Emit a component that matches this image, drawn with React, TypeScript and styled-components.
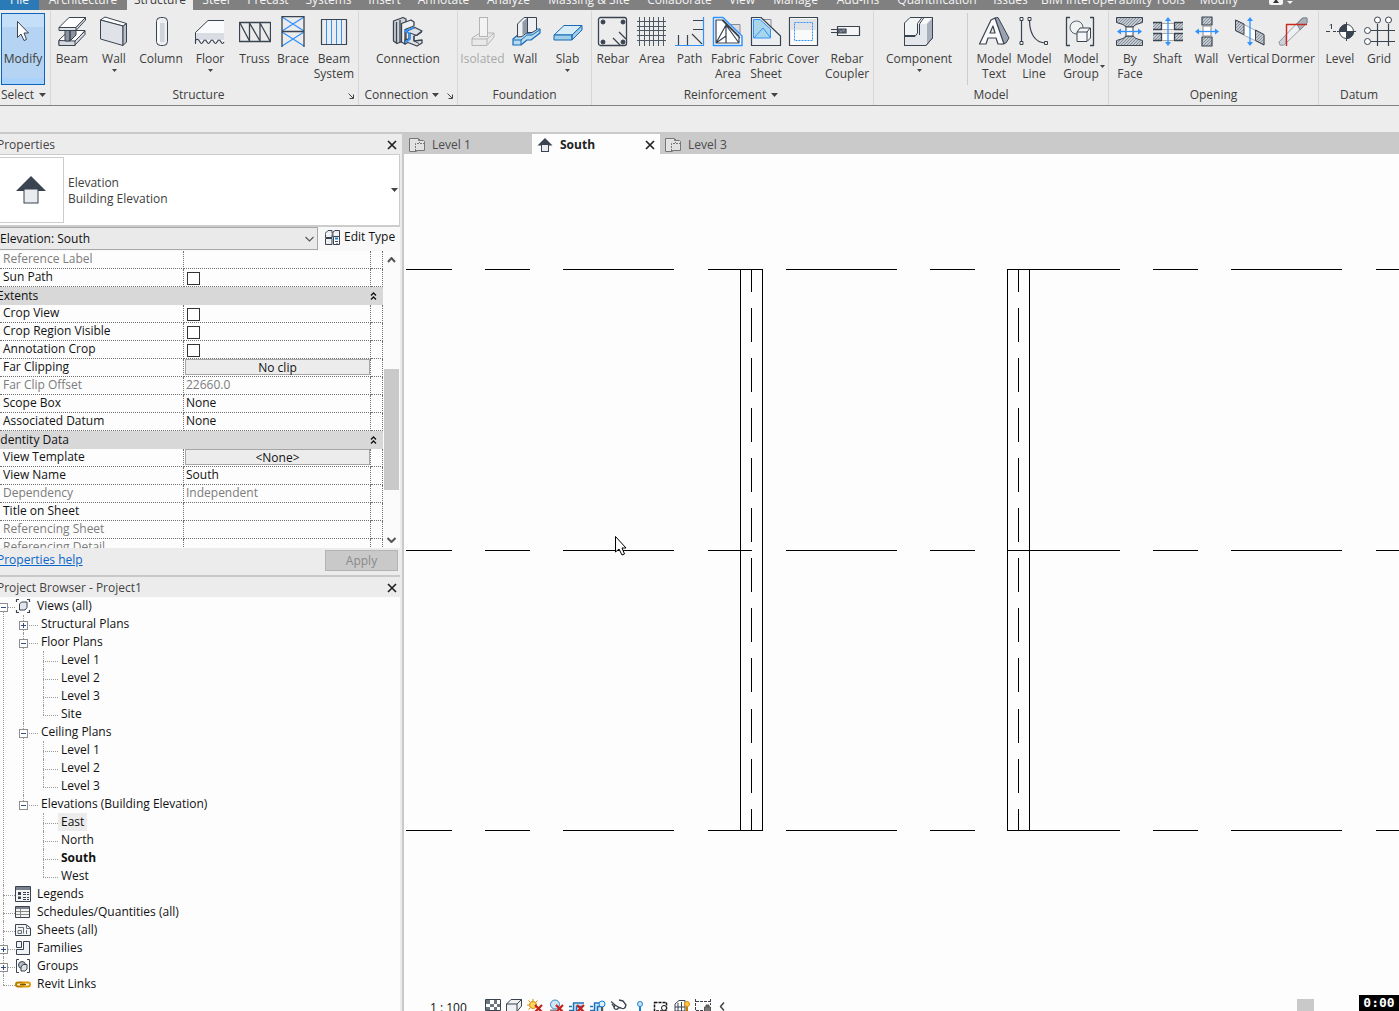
import React from "react";
import styled, { createGlobalStyle, css } from "styled-components";

const ink = "#3a4350";
const blue = "#2f93ff";
const line = "#c9c9c9";
const face = "#ececec";

const GlobalStyle = createGlobalStyle`
  *, *::before, *::after { box-sizing: border-box; }
  html, body, #root { height: 100%; }
  body { margin: 0; overflow: hidden; background: ${face}; }
  body, button, select, input { font-family: "Open Sans", "Noto Sans", sans-serif; font-size: 12px; line-height: 16px; }
  button { padding: 0; border: 0; background: none; color: inherit; }
  svg { display: block; flex: none; }
`;

const Shell = styled.div`
  display: flex;
  flex-direction: column;
  height: 100vh;
  color: #3d3d3d;
  white-space: nowrap;
`;

/* ---------- ribbon ---------- */

const TabStrip = styled.nav`
  display: flex;
  align-items: flex-end;
  flex: none;
  height: 10px;
  overflow: hidden;
  background: #808080;
`;

const RibbonTab = styled.button<{ $w: number; $kind?: "file" | "active" }>`
  flex: 0 0 ${(p) => p.$w}px;
  min-width: 0;
  display: flex;
  justify-content: center;
  padding-bottom: 2px;
  color: ${(p) => (p.$kind === "active" ? "#3d3d3d" : "#f4f4f4")};
  background: ${(p) => (p.$kind === "file" ? "#2b7ab8" : p.$kind === "active" ? face : "transparent")};
`;

const StripExtra = styled.div`
  display: flex;
  gap: 4px;
  padding: 0 0 5px 21px;
`;

const Ribbon = styled.div`
  display: flex;
  flex: none;
  height: 96px;
  overflow: hidden;
  background: ${face};
  border-bottom: 1px solid #808080;
`;

const Panel = styled.section<{ $grow?: boolean }>`
  display: flex;
  flex-direction: column;
  flex: ${(p) => (p.$grow ? "1 0 auto" : "none")};
  margin-top: 1px;
  & + & { border-left: 1px solid #d6d6d6; }
`;

const Tools = styled.div`
  display: flex;
  height: 74px;
  padding-top: 2px;
`;

const Tool = styled.button<{ $w: number; $on?: boolean }>`
  position: relative;
  flex: none;
  width: ${(p) => p.$w}px;
  display: flex;
  flex-direction: column;
  align-items: center;
  height: 72px;
  padding-top: 3px;
  line-height: 15px;
  ${(p) =>
    p.$on &&
    css`
      margin: 0 5px 0 1px;
      padding-top: 2px;
      border: 1px solid #0a64c0;
      background: linear-gradient(#c5dff8 0 18%, #b5d3f2 18% 92%, #a8d2fa 92%);
    `}
  &:disabled { color: #a9a9a9; }
`;

const ToolLabel = styled.span`
  display: block;
  margin-top: 3px;
  text-align: center;
  white-space: pre;
`;

const DropMark = styled.span<{ $side?: boolean }>`
  display: block;
  margin-top: 3px;
  ${(p) => p.$side && css`position: absolute; right: 3px; top: 49px;`}
`;

const Divider = styled.i`
  width: 1px;
  height: 72px;
  margin: 0 6px 0 3px;
  background: #cccccc;
`;

const PanelTitle = styled.div<{ $inset: number; $gap: number }>`
  display: flex;
  align-items: center;
  justify-content: center;
  position: relative;
  height: 19px;
  gap: ${(p) => p.$gap}px;
  padding: 1px ${(p) => p.$inset}px 0 0;
`;

const Launcher = styled.button`
  position: absolute;
  right: 4px;
  top: 8px;
`;

const OptionsBar = styled.div`
  flex: none;
  height: 28px;
  background: #ededed;
  border-bottom: 2px solid ${line};
`;

/* ---------- docked palettes ---------- */

const Work = styled.div`
  display: flex;
  flex: 1;
  min-height: 0;
`;

const Dock = styled.aside`
  display: flex;
  flex-direction: column;
  flex: 0 0 404px;
  overflow: hidden;
  padding-right: 2px;
  background: ${face};
  border-right: 2px solid ${line};
`;

const PaletteHead = styled.header`
  display: flex;
  align-items: center;
  justify-content: space-between;
  flex: none;
  height: 20px;
  margin-left: -3px;
  padding: 1px 2px 0 0;
  color: #444;
`;

const TypeBox = styled.button`
  display: flex;
  align-items: center;
  flex: none;
  height: 73px;
  padding: 0 1px 0 0;
  text-align: left;
  background: #fff;
  border: solid #ccc;
  border-width: 1px 1px 2px 0;
`;

const Thumb = styled.span`
  display: grid;
  place-items: center;
  width: 64px;
  height: 66px;
  padding-right: 1px;
  border: 1px solid #ccc;
  border-left: 0;
`;

const TypeText = styled.span`
  flex: 1;
  padding: 2px 0 0 4px;
`;

const FilterRow = styled.div`
  display: flex;
  flex: none;
  height: 24px;
  background: #f8f8f8;
`;

const Combo = styled.label`
  position: relative;
  display: block;
  width: 318px;
  select {
    width: 100%;
    height: 23px;
    padding: 0 20px 0 0;
    appearance: none;
    border: 1px solid #a8a8a8;
    border-left: 0;
    border-radius: 0;
    background: #eaeaea;
    color: #111;
  }
  svg { position: absolute; right: 4px; top: 9px; }
`;

const EditType = styled.button`
  display: flex;
  gap: 3px;
  padding: 2px 0 0 6px;
  color: #111;
`;

const GridArea = styled.div`
  display: flex;
  flex: 0 0 297px;
  overflow: hidden;
  background: #fdfdfd;
`;

const PropTable = styled.table`
  flex: none;
  width: 383px;
  height: min-content;
  table-layout: fixed;
  border-spacing: 0;
  color: #111;
`;

const PropRow = styled.tr<{ $dim?: boolean }>`
  height: 18px;
  color: ${(p) => (p.$dim ? "#7c7c7c" : "#111")};
  th, td {
    height: 18px;
    padding: 0 0 1px 3px;
    line-height: 16px;
    font-weight: 400;
    text-align: left;
    border: dotted #707070;
    border-width: 0 1px 1px 0;
    overflow: hidden;
  }
  td { padding: 0 0 1px 2px; }
`;

const GroupRow = styled.tr`
  height: 18px;
  background: #d8d8d8;
  th {
    height: 18px;
    padding: 0;
    font-weight: 400;
    text-align: left;
  }
`;

const GroupHead = styled.div`
  display: flex;
  align-items: center;
  justify-content: space-between;
  height: 18px;
  margin-left: -3px;
  padding-right: 6px;
`;

const Tick = styled.input`
  display: block;
  appearance: none;
  width: 13px;
  height: 13px;
  margin: 3px 0 0 1px;
  border: 1px solid #333;
  background: #fff;
`;

const CellButton = styled.button`
  display: block;
  width: 186px;
  height: 16px;
  margin: 0 0 0 -1px;
  padding-top: 1px;
  line-height: 13px;
  background: #ececec;
  border: solid #a6a6a6;
  border-width: 1px 2px 1px 1px;
`;

const Scroll = styled.div`
  display: flex;
  flex-direction: column;
  align-items: center;
  width: 17px;
  padding: 6px 1px 5px;
  background: #fbfbfb;
`;

const ScrollThumb = styled.i`
  width: 15px;
  height: 121px;
  margin: 106px 0 auto;
  background: #c9c9c9;
`;

const PaletteFoot = styled.footer`
  display: flex;
  justify-content: space-between;
  flex: none;
  height: 29px;
  margin-left: -3px;
  padding: 2px 2px 0 0;
  border-bottom: 2px solid ${line};
  a { height: 20px; line-height: 20px; color: #0a66c8; }
`;

const Apply = styled.button`
  width: 73px;
  height: 21px;
  border: 1px solid #b4b4b4;
  background: #c9c9c9;
  &:disabled { color: #8a8a8a; }
`;

const TreeArea = styled.div`
  flex: 1;
  min-height: 0;
  overflow: hidden;
  background: #fdfdfd;
  color: #111;
`;

const Branch = styled.ul`
  list-style: none;
  margin: 0 0 0 20px;
  padding: 0;
  ${TreeArea} > & { margin-left: 3px; }
`;

const Node = styled.li`
  position: relative;
  &::before {
    content: "";
    position: absolute;
    left: 0;
    top: 0;
    bottom: 0;
    border-left: 1px dotted #9a9a9a;
  }
  &:last-child::before { bottom: auto; height: 10px; }
  ${TreeArea} > ul > &:first-child::before { top: 10px; }
`;

const NodeRow = styled.div`
  display: flex;
  align-items: center;
  height: 18px;
`;

const Stem = styled.span<{ $w: number }>`
  position: relative;
  flex: 0 0 ${(p) => p.$w}px;
  height: 1px;
  margin-top: 2px;
  border-top: 1px dotted #9a9a9a;
`;

const Toggle = styled.button`
  position: absolute;
  left: -4px;
  top: -5px;
  background: #fff;
`;

const NodeLabel = styled.span<{ $state?: "hover" | "open"; $icon?: boolean }>`
  height: 18px;
  line-height: 18px;
  margin-left: ${(p) => (p.$icon ? 3 : 0)}px;
  padding: 0 3px;
  font-weight: ${(p) => (p.$state === "open" ? 700 : 400)};
  background: ${(p) => (p.$state === "hover" ? "#ececec" : "transparent")};
`;

/* ---------- views ---------- */

const Views = styled.main`
  display: flex;
  flex-direction: column;
  flex: 1;
  min-width: 0;
  background: #fdfdfd;
`;

const ViewTabs = styled.div`
  display: flex;
  flex: none;
  height: 20px;
  background: #cacaca;
`;

const ViewTab = styled.div<{ $on?: boolean }>`
  display: flex;
  align-items: center;
  flex: 0 0 128px;
  padding: 1px 4px 0 5px;
  color: ${(p) => (p.$on ? "#222" : "#4c4c4c")};
  font-weight: ${(p) => (p.$on ? 700 : 400)};
  background: ${(p) => (p.$on ? "#fdfdfd" : "transparent")};
  > span { flex: 1; padding-left: 7px; }
`;

const Sheet = styled.div`
  flex: 1;
  min-height: 0;
  overflow: hidden;
`;

const ViewBar = styled.div`
  display: flex;
  flex: none;
  height: 16px;
  padding-left: 26px;
  overflow: hidden;
`;

const Scale = styled.button`
  width: 55px;
  padding-top: 5px;
  text-align: left;
  height: 21px;
  color: #111;
`;

const BarTools = styled.div`
  display: flex;
  flex: 1;
  align-items: flex-start;
  gap: 5px;
  padding-top: 4px;
`;

const HThumb = styled.i`
  width: 17px;
  height: 12px;
  margin: 4px 45px 0 0;
  background: #c9c9c9;
`;

const Timer = styled.div`
  width: 40px;
  height: 16px;
  background: #000;
  color: #fff;
  font: 700 13px/16px "DejaVu Sans Mono", monospace;
  text-align: center;
`;

/* ---------- icons ---------- */

const I = ({ children, s = 32 }: { children: React.ReactNode; s?: number }) => (
  <svg width={s} height={s} viewBox={`0 0 ${s} ${s}`} fill="none" stroke={ink} strokeWidth="1" strokeLinejoin="round" aria-hidden>
    {children}
  </svg>
);

const Tri = ({ w = 5 }: { w?: number }) => (
  <svg width={w} height={(w + 1) / 2} viewBox={`0 0 ${w} ${(w + 1) / 2}`} aria-hidden>
    <path d={`M0 0H${w}L${w / 2} ${(w + 1) / 2}Z`} fill="#444" />
  </svg>
);

const Cross = () => (
  <svg width="12" height="12" viewBox="0 0 12 12" aria-hidden>
    <path d="M2 2L10 10M10 2L2 10" stroke="#222" strokeWidth="1.7" />
  </svg>
);

const Chevron = ({ up, thick }: { up?: boolean; thick?: boolean }) => (
  <svg width="9" height="6" viewBox="0 0 9 6" aria-hidden>
    <path d={up ? "M1 5L4.500 1L8 5" : "M0.500 1L4.500 5L8.500 1"} fill="none" stroke="#555" strokeWidth={thick ? 2 : 1.1} />
  </svg>
);

const hatch = (id: string) => (
  <defs>
    <pattern id={id} width="3" height="3" patternUnits="userSpaceOnUse">
      <rect width="3" height="3" fill="#c3c9d1" stroke="none" />
      <path d="M0 3L3 0" stroke="#6c7580" strokeWidth=".7" />
    </pattern>
  </defs>
);

const icons: Record<string, React.ReactNode> = {
  modify: <I><path d="M10.500 5.500V21.500L14 18L17 24.500L19.500 23.500L17 17H21.500Z" fill="#fff" /></I>,
  beam: (
    <I>
      <path d="M3 24L13 14.500H29L20 24.500V27L19 29.500H3Z" fill="#fff" />
      <path d="M3 24.500V29.500H19V25ZM19 29L29 18.500V15L19 25" fill="#d5dae0" />
      <path d="M9 14H14V25H9ZM14 14L20 8V19L14 25Z" fill="#8b949f" />
      <path d="M3 11.500L13 1.500H29.500L20 11.500Z" fill="#fff" />
      <path d="M3 11.500H20V14.500H3ZM20 14.500L29.500 4V1.500L20 11.500" fill="#dfe3e8" />
    </I>
  ),
  wall: (
    <I>
      <path d="M2.500 4L7 1L28.500 7.500L25 10Z" fill="#fff" />
      <path d="M2.500 4V23L25 29.500V10Z" fill="#dfe2e8" />
      <path d="M25 10L28.500 7.500V26L25 29.500Z" fill="#b9c0ca" />
    </I>
  ),
  column: (
    <I>
      <rect x="11.500" y="1.500" width="11" height="28" rx="4" fill="#eceef1" />
      <path d="M15 7H19.500V26H15Z" fill="#cfd3da" stroke="none" />
      <path d="M13.500 4V27" stroke="#fff" strokeWidth="2" />
    </I>
  ),
  floor: (
    <I>
      <path d="M1.500 25V16.500L14 4.500H30V25Z" fill="#fafbfc" stroke="none" />
      <path d="M2 17H30V24H2Z" fill="#d9dde3" stroke="none" />
      <path d="M1.500 28V16.500L14 4.500H30" />
      <path d="M1.500 27V24Q4 22 6 26Q7.500 29 9 26Q11 22 13 26Q14.500 29 16 26Q18 22 20 26Q21.500 29 23 26Q25 22 27 26Q28.500 29 30 26" strokeWidth="1.200" fill={face} />
    </I>
  ),
  truss: (
    <I>
      <rect x=".5" y="6.500" width="31" height="19" strokeWidth="1.300" />
      <path d="M1 7L10.500 25V7L21 25V7L31 25" strokeWidth="1.300" />
    </I>
  ),
  brace: (
    <I>
      <path d="M5 1L27 15M27 1L5 15M5 16L27 30M27 16L5 30" stroke={blue} strokeWidth="1.300" />
      <path d="M5 31V.5H27V31M5 15.500H27" strokeWidth="1.300" />
    </I>
  ),
  beamSystem: (
    <I>
      <path d="M8.500 4V28M13.500 4V28M18.500 4V28M23.500 4V28" stroke={blue} />
      <rect x="3.500" y="3.500" width="25" height="25" strokeWidth="1.200" />
    </I>
  ),
  connection: (
    <I>
      <path d="M1.500 5L11 1.500L14 3V24L5 27.500L1.500 25Z" fill="#cfd4da" strokeWidth="1.300" />
      <path d="M4.500 6V27M8 4V26" strokeWidth="1.300" />
      <path d="M9.500 7.500L19 4L22 6V10L13 13.500V28L9.500 26Z" fill="#eef0f2" strokeWidth="1.300" />
      <path d="M15 15L23 11.500L30 15L25 19L22 20V25L30 24V27L25 30L16 26.500L13 28V24L17 23V18Z" fill="#dde1e6" strokeWidth="1.300" />
      <path d="M22 11.500L13 15L18 17.500V23L13 26.500" stroke={blue} strokeWidth="1.800" />
      <path d="M18 17L25 19.500L30 16M22 20V25L27 27.500" />
    </I>
  ),
  isolated: (
    <svg width="32" height="32" viewBox="0 0 32 32" fill="#e9e9e9" stroke="#b5b5b5" aria-hidden>
      <path d="M5 22L13 17H27V21L20 29.500H5ZM5 23H20V29M20 23L27 17" />
      <rect x="12.500" y="1.500" width="8" height="19" fill="#f3f3f3" />
    </svg>
  ),
  foundWall: (
    <I>
      <path d="M3 23L9 18L21 17L25 13H30V17L21 24H17L11 29H3Z" fill="#b7dcf0" stroke="#1769b5" strokeWidth="1.200" />
      <path d="M3.500 24H11L17 19H22L29.500 14M11 24V29" stroke="#1769b5" />
      <path d="M7.500 21V8L14 1.500H26.500V14L22 16.500H17L12 20.500Z" fill="#eef0f3" />
      <path d="M12.500 19V6L17 2V16Z" fill="#8f98a4" stroke="none" />
      <path d="M17.500 16V2" />
    </I>
  ),
  slab: (
    <I>
      <path d="M2 19L12 9.500H30L20 19Z" fill="#d6ecf7" stroke="#1769b5" />
      <path d="M2 19H20V24H2ZM20 24L30 14V9.500L20 19Z" fill="#9fcee8" stroke="#1769b5" />
    </I>
  ),
  rebar: (
    <I>
      <rect x="1.500" y="1.500" width="28" height="28" rx="2" strokeWidth="1.300" />
      <g fill={ink}><circle cx="6" cy="6" r="2" /><circle cx="26" cy="6" r="2" /><circle cx="6" cy="26" r="2" /><circle cx="26" cy="26" r="2" /></g>
      <path d="M16 22L23 29M22 16L29 23" strokeWidth="1.300" />
    </I>
  ),
  area: (
    <I>
      <path d="M3.500 1V30M8.500 1V30M13.500 1V30M17.500 1V30M22.500 1V30M27.500 1V30M1 5.500H30M1 10.500H30M1 14.500H30M1 19.500H30M1 24.500H30" stroke="#4d5663" />
    </I>
  ),
  path: (
    <I>
      <path d="M29.500 1V29.500H1" stroke={blue} strokeWidth="1.200" />
      <path d="M19 4.500H29M19 13.500H29M4.500 19V29M13.500 19V29M18 18L28 28" strokeWidth="1.200" />
    </I>
  ),
  fabricArea: (
    <I>
      <path d="M17 8.500H28V28H17Z" fill="#ddd" stroke="#888d99" />
      <path d="M1.500 1.500H11L30 20V29.500H1.500Z" fill="#fff" stroke={blue} strokeWidth="1.500" />
      <path d="M4 4H11L27 20V27H4ZM14 7V27L4 27L14 9L27 27M10 4L28 22M14 20L4 27" strokeWidth="1.200" />
    </I>
  ),
  fabricSheet: (
    <I>
      <path d="M12 3.500H21V20" stroke="#888d99" />
      <path d="M1.500 1.500H11L30.500 20V29.500H1.500Z" fill="#eceef1" strokeWidth="1.200" />
      <path d="M3.500 3.500H10L20.500 13V22H3.500ZM4 22L13 12L20 21" fill="#a9d5ea" stroke={blue} />
    </I>
  ),
  cover: (
    <I>
      <rect x="2.500" y="1.500" width="28" height="28" fill="#fafafa" strokeWidth="1.200" />
      <rect x="4" y="3" width="25" height="11" fill="#e0e2e6" stroke="none" />
      <rect x="7.500" y="6.500" width="18" height="18" stroke={blue} strokeDasharray="2 1" />
    </I>
  ),
  coupler: (
    <I>
      <path d="M0 13.500H9M0 16.500H9" />
      <rect x="6.500" y="10.500" width="22" height="9" strokeWidth="1.200" fill="#f6f6f6" />
      <path d="M7 13H15V17H7Z" fill="#8a919b" strokeWidth="1.200" />
      <path d="M7 17L10 13L12 17L15 13" strokeWidth=".8" />
    </I>
  ),
  component: (
    <I>
      <path d="M1.500 8L9 1.500H29.500V22L23 29.500H1.500Z" fill="#e3e6ea" />
      <path d="M1.500 8L9 1.500H29.500L23 8H17Z" fill="#fafafa" stroke="none" />
      <path d="M24 8L29.500 2V22L24 29Z" fill="#a8b0bb" stroke="none" />
      <path d="M1.500 7L7 1.500H19L14.500 7.500V17L12 20.500H1.500" fill="#f1f3f5" />
      <path d="M1.500 19.500H12M21 1.500L16.500 8V19M19 1.500H29.500V22L23 29.500H1.500V7" />
    </I>
  ),
  modelText: (
    <I>
      <path d="M17 2L20 1.500L31 22L28 27L23 28Z" fill="#9aa3af" />
      <path d="M1.500 28L13 4L17 2L26 28H20L18 22H10L8 28ZM12 17H17L15 10Z" fill="#fafafa" fillRule="evenodd" strokeWidth="1.200" />
    </I>
  ),
  modelLine: (
    <I>
      <path d="M3.500 4V26M11.500 4C11.500 16 16 27 28 27" strokeWidth="1.200" />
      <path d="M2 1.500H5V4.500H2ZM2 25.500H5V28.500H2ZM10 1.500H13V4.500H10ZM26.500 25.500H29.500V28.500H26.500Z" fill="#eee" />
    </I>
  ),
  modelGroup: (
    <I>
      <path d="M5 1.500H1.500V29.500H5M25 1.500H28.500V29.500H25" strokeWidth="1.300" />
      <circle cx="11.500" cy="11.500" r="6.500" fill="#f0f2f4" stroke="#59626e" />
      <path d="M12 16L15 12H25.500V22L22 25.500H12Z" fill="#f5f6f8" />
      <path d="M12 16H22V25M22 16L25 12" />
    </I>
  ),
  byFace: (
    <I>
      {hatch("hf")}
      <path d="M2.500 1.500H28.500V6.500L22 8.500L19 11H12L9 8.500L2.500 6.500Z" fill="url(#hf)" />
      <path d="M2.500 29.500H28.500V24.500L22 22.500L19 20H12L9 22.500L2.500 24.500Z" fill="url(#hf)" />
      <path d="M12 11H19V20H12Z" fill="#fff" />
      <path d="M4 15.500H27" stroke={blue} strokeWidth="1.300" />
      <path d="M3 15.500L7 12.500V18.500ZM28 15.500L24 12.500V18.500Z" fill={blue} stroke="none" />
    </I>
  ),
  shaft: (
    <I>
      {hatch("hs")}
      <path d="M2 7H30V13H2ZM2 18H30V24H2Z" fill="#fff" stroke="none" />
      <path d="M1 6.500H9.500V13.500H1M31 6.500H22.500V13.500H31M1 17.500H9.500V24.500H1M31 17.500H22.500V24.500H31" fill="url(#hs)" strokeWidth="1.300" />
      <path d="M10 7.500H22M10 13.500H22M10 17.500H22M10 24.500H22" stroke="#aaa" />
      <path d="M16 4V28" stroke={blue} strokeWidth="1.300" />
      <path d="M16 1L13 5H19ZM16 30L13 26H19Z" fill={blue} stroke="none" />
    </I>
  ),
  openWall: (
    <I>
      {hatch("hw")}
      <path d="M11 1H21V9H11ZM11 21H21V30H11Z" fill="url(#hw)" strokeWidth="1.200" />
      <path d="M12 10H20V20H12Z" fill="#fff" stroke="#888" />
      <path d="M6 15.500H26" stroke={blue} strokeWidth="1.300" />
      <path d="M4 15.500L8 12.500V18.500ZM28 15.500L24 12.500V18.500Z" fill={blue} stroke="none" />
    </I>
  ),
  vertical: (
    <I>
      {hatch("hv")}
      <path d="M2.500 4L31 19V29L2.500 15Z" fill="#fff" stroke="#aaa" />
      <path d="M2.500 4L11 8V18.500L2.500 14.500ZM22.500 14L31 18.500V29L22.500 24.500Z" fill="url(#hv)" />
      <path d="M17 4V27" stroke={blue} strokeWidth="1.300" />
      <path d="M17 1L14 5H20ZM17 30L14 26H20Z" fill={blue} stroke="none" />
    </I>
  ),
  dormer: (
    <I>
      <path d="M2 26L25 2H30V7L7 29L3 29Z" fill="#eef0f3" stroke="#999fa8" />
      <path d="M20 8L26 2H30V7L23 14Z" fill="#aab1ba" stroke="#7d858f" />
      <path d="M2 26L9 19V27L7 29H3Z" fill="#ccd1d8" stroke="#999fa8" />
      <path d="M9.500 30V8.500H30" stroke="#c8281e" strokeWidth="1.400" />
    </I>
  ),
  level: (
    <I>
      <path d="M2 15.500H6M9 15.500H12M7.500 13V8L6 9.500" />
      <circle cx="22.500" cy="15.500" r="7" fill="#fff" />
      <path d="M22.500 15.500V8.500A7 7 0 0 0 15.500 15.500ZM22.500 15.500V22.500A7 7 0 0 0 29.500 15.500Z" fill={ink} />
      <path d="M13 15.500H32M22.500 6V25" />
    </I>
  ),
  grid: (
    <I>
      <path d="M14.500 8V30M25.500 8V30M8 14.500H32M8 25.500H32" strokeWidth="1.200" />
      <g fill="#fff"><circle cx="14.500" cy="4" r="3" /><circle cx="25.500" cy="4" r="3" /><circle cx="4.500" cy="14.500" r="3" /><circle cx="4.500" cy="25.500" r="3" /></g>
    </I>
  ),
};

const HouseIcon = ({ s = 16 }: { s?: number }) => (
  <svg width={s} height={s} viewBox="0 0 32 32" aria-hidden>
    <path d="M16 2L31 17H1Z" fill={ink} />
    <rect x="9" y="15" width="14" height="14" fill="#e9ebee" stroke={ink} strokeWidth={s > 16 ? 1 : 2} />
  </svg>
);

const PlanIcon = () => (
  <svg width="16" height="14" viewBox="0 0 16 14" fill="#e2e2e2" stroke="#777" aria-hidden>
    <path d="M.5 .5H9.500V2.500H14.500L15.500 3.500V12.500H7.500V13.500H.5Z" />
    <path d="M6.500 13V5.500H15M10.500 1V5" fill="none" strokeDasharray="2 1" />
  </svg>
);

const EditIcon = () => (
  <I s={17}>
    <path d="M1.500 4L4 1.500H8V8.500H1.500ZM9 3L11 1.500H15.500V8.500H9ZM1.500 9.500H8V15.500H1.500Z" fill="#eceef1" />
    <path d="M1.500 5H8M9.500 5H14" stroke="#fff" />
    <rect x="9.500" y="7.500" width="6" height="8" fill="#fff" />
    <path d="M11 9.500H14" stroke="#1b7fd0" strokeWidth="2" /><path d="M11 12.500H14M12.500 14.500H13.500" />
  </I>
);

const treeIcons: Record<string, React.ReactNode> = {
  views: <I s={16}><path d="M4 1.500H1.500V4M12 1.500H14.500V4M4 14.500H1.500V12M12 14.500H14.500V12" strokeWidth="1.200" /><path d="M4.500 6L6.500 4H12V9.500L10 12H4.500Z" fill="#e3e6ee" /></I>,
  legends: <I s={16}><rect x=".5" y=".5" width="15" height="15" fill="#f4f4f4" /><path d="M1 2.500H15" strokeWidth="3" stroke="#78818c" /><path d="M3 6H6V9H3ZM3 10.500H6V13H3Z" fill={ink} stroke="none" /><path d="M8 6.500H14M8 8.500H14M8 11.500H14M8 13.500H14" strokeDasharray="3 1" /></I>,
  schedules: <I s={16}><rect x=".5" y="2.500" width="14" height="11" fill="#f4f4f4" /><path d="M1 4H14" strokeWidth="2" stroke="#78818c" /><path d="M5.500 5V13M1 7.500H14M1 10.500H14" stroke="#888" /></I>,
  sheets: <I s={16}><path d="M.5 2.500H11L15.500 6V13.500H.5Z" fill="#f4f4f4" /><path d="M11.500 3V6.500H15M3 5.500H8.500V11.500M3 8.500H6.500V11.500H3ZM11.500 8V12" stroke="#66707c" /></I>,
  families: <I s={16}><path d="M1.500 1.500H6.500V7.500H1.500ZM8.500 1.500H14.500V14.500H1.500V9.500H8.500Z" fill="#f0f2f5" /></I>,
  groups: <I s={16}><path d="M4 1.500H1.500V14.500H4M12 1.500H14.500V14.500H12" /><circle cx="7" cy="7" r="3.500" fill="#b5bbc3" /><path d="M6 9L8 6.500H12V11L10 13H6Z" fill="#dfe2e6" /></I>,
  links: <I s={16}><rect x="1" y="6.500" width="8" height="4" rx="2" stroke="#b57d00" strokeWidth="2" fill="#fff0b0" /><rect x="7" y="6.500" width="8" height="4" rx="2" stroke="#d99b0a" strokeWidth="2" /><path d="M5 8.500H11" stroke="#7a5500" /></I>,
};

/* ---------- data ---------- */

type ToolSpec = { icon: string; label: string; w: number; drop?: boolean | "side"; off?: boolean; on?: boolean; split?: boolean };
type PanelSpec = { title: string; menu?: boolean; launch?: boolean; tools: ToolSpec[] };

const ribbonTabs: [string, number, ("file" | "active")?][] = [
  ["File", 39, "file"], ["Architecture", 88], ["Structure", 66, "active"], ["Steel", 46], ["Precast", 58], ["Systems", 63],
  ["Insert", 49], ["Annotate", 69], ["Analyze", 61], ["Massing & Site", 100], ["Collaborate", 81], ["View", 44], ["Manage", 63],
  ["Add-Ins", 62], ["Quantification", 96], ["Issues", 51], ["BIM Interoperability Tools", 154], ["Modify", 58],
];

const panels: PanelSpec[] = [
  { title: "Select", menu: true, tools: [{ icon: "modify", label: "Modify", w: 44, on: true }] },
  {
    title: "Structure", launch: true,
    tools: [
      { icon: "beam", label: "Beam", w: 42 }, { icon: "wall", label: "Wall", w: 42, drop: true }, { icon: "column", label: "Column", w: 52 },
      { icon: "floor", label: "Floor", w: 46, drop: true }, { icon: "truss", label: "Truss", w: 43 }, { icon: "brace", label: "Brace", w: 34 },
      { icon: "beamSystem", label: "Beam\nSystem", w: 48 },
    ],
  },
  { title: "Connection", menu: true, launch: true, tools: [{ icon: "connection", label: "Connection", w: 98 }] },
  {
    title: "Foundation",
    tools: [{ icon: "isolated", label: "Isolated", w: 49, off: true }, { icon: "foundWall", label: "Wall", w: 37 }, { icon: "slab", label: "Slab", w: 47, drop: true }],
  },
  {
    title: "Reinforcement", menu: true,
    tools: [
      { icon: "rebar", label: "Rebar", w: 42 }, { icon: "area", label: "Area", w: 36 }, { icon: "path", label: "Path", w: 39 },
      { icon: "fabricArea", label: "Fabric\nArea", w: 38 }, { icon: "fabricSheet", label: "Fabric\nSheet", w: 38 },
      { icon: "cover", label: "Cover", w: 36 }, { icon: "coupler", label: "Rebar\nCoupler", w: 52 },
    ],
  },
  {
    title: "Model",
    tools: [
      { icon: "component", label: "Component", w: 90, drop: true }, { icon: "modelText", label: "Model\nText", w: 40, split: true },
      { icon: "modelLine", label: "Model\nLine", w: 40 }, { icon: "modelGroup", label: "Model\nGroup", w: 54, drop: "side" },
    ],
  },
  {
    title: "Opening",
    tools: [
      { icon: "byFace", label: "By\nFace", w: 42 }, { icon: "shaft", label: "Shaft", w: 33 }, { icon: "openWall", label: "Wall", w: 45 },
      { icon: "vertical", label: "Vertical", w: 39 }, { icon: "dormer", label: "Dormer", w: 50 },
    ],
  },
  { title: "Datum", tools: [{ icon: "level", label: "Level", w: 42 }, { icon: "grid", label: "Grid", w: 36 }] },
];

type Prop = { name: string; kind?: "group" | "check" | "button"; value?: string; dim?: boolean };
const props: Prop[] = [
  { name: "Reference Label", dim: true }, { name: "Sun Path", kind: "check" },
  { name: "Extents", kind: "group" },
  { name: "Crop View", kind: "check" }, { name: "Crop Region Visible", kind: "check" }, { name: "Annotation Crop", kind: "check" },
  { name: "Far Clipping", kind: "button", value: "No clip" }, { name: "Far Clip Offset", value: "22660.0", dim: true },
  { name: "Scope Box", value: "None" }, { name: "Associated Datum", value: "None" },
  { name: "Identity Data", kind: "group" },
  { name: "View Template", kind: "button", value: "<None>" }, { name: "View Name", value: "South" },
  { name: "Dependency", value: "Independent", dim: true }, { name: "Title on Sheet" },
  { name: "Referencing Sheet", dim: true }, { name: "Referencing Detail", dim: true },
];

type TreeNode = { label: string; icon?: string; fold?: "+" | "-"; state?: "hover" | "open"; kids?: TreeNode[] };
const tree: TreeNode[] = [
  {
    label: "Views (all)", icon: "views", fold: "-",
    kids: [
      { label: "Structural Plans", fold: "+" },
      { label: "Floor Plans", fold: "-", kids: [{ label: "Level 1" }, { label: "Level 2" }, { label: "Level 3" }, { label: "Site" }] },
      { label: "Ceiling Plans", fold: "-", kids: [{ label: "Level 1" }, { label: "Level 2" }, { label: "Level 3" }] },
      {
        label: "Elevations (Building Elevation)", fold: "-",
        kids: [{ label: "East", state: "hover" }, { label: "North" }, { label: "South", state: "open" }, { label: "West" }],
      },
    ],
  },
  { label: "Legends", icon: "legends" }, { label: "Schedules/Quantities (all)", icon: "schedules" }, { label: "Sheets (all)", icon: "sheets" },
  { label: "Families", icon: "families", fold: "+" }, { label: "Groups", icon: "groups", fold: "+" }, { label: "Revit Links", icon: "links" },
];

/* ---------- parts ---------- */

const RibbonPanel = ({ p, last }: { p: PanelSpec; last: boolean }) => (
  <Panel $grow={last}>
    <Tools>
      {p.tools.map((t) => (
        <React.Fragment key={t.label}>
          {t.split && <Divider />}
          <Tool $w={t.w} $on={t.on} disabled={t.off}>
            {icons[t.icon]}
            <ToolLabel>{t.label}</ToolLabel>
            {t.drop && <DropMark $side={t.drop === "side"}><Tri /></DropMark>}
          </Tool>
        </React.Fragment>
      ))}
    </Tools>
    <PanelTitle $inset={p.launch ? 12 : p.menu ? 3 : 0} $gap={p.launch ? 4 : 5}>
      {p.title}
      {p.menu && <Tri w={7} />}
      {p.launch && (
        <Launcher aria-label={`${p.title} settings`}>
          <svg width="6" height="6" viewBox="0 0 6 6" aria-hidden><path d="M.5 .5L5 5M5.500 1.500V5.500H1.500" fill="none" stroke="#444" /></svg>
        </Launcher>
      )}
    </PanelTitle>
  </Panel>
);

const TreeItem = ({ n, depth }: { n: TreeNode; depth: number }) => (
  <Node>
    <NodeRow>
      <Stem $w={depth === 0 ? 12 : 15}>
        {n.fold && (
          <Toggle aria-label={`Toggle ${n.label}`}>
            <svg width="9" height="9" viewBox="0 0 9 9" aria-hidden>
              <rect x=".5" y=".5" width="8" height="8" fill="#fff" stroke="#8f8f8f" />
              <path d={n.fold === "+" ? "M2 4.500H7M4.500 2V7" : "M2 4.500H7"} stroke="#34508c" />
            </svg>
          </Toggle>
        )}
      </Stem>
      {n.icon && treeIcons[n.icon]}
      <NodeLabel $state={n.state} $icon={!!n.icon}>{n.label}</NodeLabel>
    </NodeRow>
    {n.kids && <Branch>{n.kids.map((k) => <TreeItem key={k.label} n={k} depth={depth + 1} />)}</Branch>}
  </Node>
);

const PropertyRow = ({ p, id }: { p: Prop; id: string }) =>
  p.kind === "group" ? (
    <GroupRow>
      <th colSpan={3}>
        <GroupHead>
          {p.name}
          <svg width="7" height="8" viewBox="0 0 7 8" aria-hidden><path d="M1 3.500L3.500 1L6 3.500M1 7.500L3.500 5L6 7.500" fill="none" stroke="#111" strokeWidth="1.300" /></svg>
        </GroupHead>
      </th>
    </GroupRow>
  ) : (
    <PropRow $dim={p.dim}>
      <th>{p.kind === "check" ? <label htmlFor={id}>{p.name}</label> : p.name}</th>
      <td>{p.kind === "check" ? <Tick id={id} type="checkbox" /> : p.kind === "button" ? <CellButton>{p.value}</CellButton> : p.value}</td>
      <td />
    </PropRow>
  );

/* Level lines and columns of the elevation, in sheet pixels. */
const levelDashes = [[2, 48], [81, 126], [159, 270], [304, 358], [382, 493], [526, 571], [603, 716], [749, 794], [827, 938], [972, 1100]];
const centreDashes = [[116, 138], [154, 188], [204, 238], [254, 288], [304, 338], [354, 388], [404, 438], [454, 488], [504, 538], [555, 589], [605, 639], [655, 676]];

const Elevation = () => (
  <svg width="100%" height="100%" fill="none" stroke="#000" shapeRendering="crispEdges" role="img" aria-label="South elevation">
    {[115, 396, 676].map((y) => (
      <path key={y} d={levelDashes.map(([a, b]) => `M${a} ${y + 0.5}H${y === 396 && b === 358 ? 348 : b}`).join("")} />
    ))}
    {[336, 603].map((x) => (
      <React.Fragment key={x}>
        <path d={`M${x + 0.5} 115V677M${x + 22.5} 115V677`} />
        <path d={centreDashes.map(([a, b]) => `M${x + 11.5} ${a}V${b}`).join("")} />
      </React.Fragment>
    ))}
    <path d="M211.500 382.500V398L215 395L218 401L220.500 400L218 394H222Z" fill="#fff" shapeRendering="auto" />
  </svg>
);

const sun = <><circle cx="6" cy="6" r="3.500" fill="#ffd75a" stroke="#d48a00" /><path d="M6 0V2M0 6H2M1.500 1.500L3 3M10.500 1.500L9 3M1.500 10.500L3 9" stroke="#d48a00" /></>;
const redX = <path d="M8 6L15 13M15 6L8 13" stroke="#c4221c" strokeWidth="2.200" />;
const crop = <><rect x="5" y="5" width="9" height="8" fill="#cfe6f7" stroke="none" /><path d="M0 11.500H4M4.500 13V4H15M0 7.500H3M7.500 13V7.500H13" stroke="#1d6fb8" strokeWidth="1.500" /></>;
const bulb = <><circle cx="12" cy="5" r="3" fill="#d9eefc" stroke="#1b7fd0" /><path d="M12 8V12" stroke="#555" strokeWidth="2" /></>;
const barIcons: [string, React.ReactNode][] = [
  ["Detail level", <><rect x=".5" y=".5" width="15" height="11" fill="#fff" /><path d="M1 1H5V5H1ZM9 1H12V5H9ZM5 5H9V8H5ZM12 5H15V8H12ZM1 8H5V11H1ZM9 8H12V11H9Z" fill="#6d7680" stroke="none" /></>],
  ["Visual style", <path d="M.5 5L5 .5H15.500V7L11 12.500H.5ZM.5 5H11V12M11 5L15.500 .5" fill="#eef0f2" />],
  ["Sun path", <>{sun}{redX}</>],
  ["Shadows", <><circle cx="7" cy="5.500" r="4.500" fill="#cfe6f7" stroke="#3b86c6" /><path d="M2 11.500H8" stroke="#888" strokeWidth="2" />{redX}</>],
  ["Crop view", <>{crop}{redX}</>],
  ["Crop region", <>{crop}{bulb}</>],
  ["Lock view", <path d="M0 2.500L4 6L3 9Q5 12 8 8.500L10 9Q14 11 15 6L12 2L8 1M3 8L1 5M8 8.500L4 6" fill="#fff" strokeWidth="1.300" />],
  ["Hide", <><circle cx="8" cy="5" r="2.500" fill="#c9e6fb" stroke="#1b7fd0" /><path d="M8 8V12" stroke="#1b7fd0" strokeWidth="2" /></>],
  ["Reveal", <><path d="M1.500 3.500H13.500V12H1.500Z" strokeDasharray="3 1" stroke="#111" strokeWidth="1.500" /><circle cx="11" cy="9" r="2.500" fill="#fff" stroke="#111" /></>],
  ["Analytical", <><path d="M1 5L5 1.500H11V12H1ZM1 8H11M4 4V12M7.500 3V12" /><circle cx="13" cy="5" r="2.500" fill="#ffc94d" stroke="#e08a00" /><path d="M13 8V12" stroke="#c47a00" strokeWidth="2" /></>],
  ["Constraints", <><path d="M.5 0V12M15.500 0V6M1 2.500H15M1 11.500H8" strokeDasharray="3 1" /><path d="M9.500 8H15.500V12.500H9.500ZM11 8V6H14V8" fill="#777" stroke="#555" /></>],
  ["Collapse", <path d="M8 3.500L4.500 7.500L8 11.500" stroke="#444" strokeWidth="1.500" />],
];

export default function App() {
  return (
    <Shell>
      <GlobalStyle />
      <TabStrip>
        {ribbonTabs.map(([t, w, k]) => <RibbonTab key={t} $w={w} $kind={k}>{t}</RibbonTab>)}
        <StripExtra>
          <svg width="14" height="10" viewBox="0 0 14 10" aria-hidden><rect width="14" height="10" rx="2" fill="#f4f4f4" /><path d="M4 8H10L7 4Z" fill="#333" /></svg>
          <svg width="6" height="10" viewBox="0 0 6 10" aria-hidden><path d="M0 6H6L3 9Z" fill="#f4f4f4" /></svg>
        </StripExtra>
      </TabStrip>
      <Ribbon>{panels.map((p, i) => <RibbonPanel key={p.title} p={p} last={i === panels.length - 1} />)}</Ribbon>
      <OptionsBar />
      <Work>
        <Dock>
          <PaletteHead>Properties<button aria-label="Close properties"><Cross /></button></PaletteHead>
          <TypeBox>
            <Thumb><HouseIcon s={32} /></Thumb>
            <TypeText>Elevation<br />Building Elevation</TypeText>
            <Tri w={7} />
          </TypeBox>
          <FilterRow>
            <Combo>
              <select aria-label="Element filter"><option>Elevation: South</option></select>
              <Chevron />
            </Combo>
            <EditType><EditIcon />Edit Type</EditType>
          </FilterRow>
          <GridArea>
            <PropTable>
              <colgroup><col style={{ width: 184 }} /><col style={{ width: 187 }} /><col /></colgroup>
              <tbody>{props.map((p, i) => <PropertyRow key={p.name} p={p} id={`prop-${i}`} />)}</tbody>
            </PropTable>
            <Scroll><Chevron up thick /><ScrollThumb /><Chevron thick /></Scroll>
          </GridArea>
          <PaletteFoot><a href="#help">Properties help</a><Apply disabled>Apply</Apply></PaletteFoot>
          <PaletteHead>Project Browser - Project1<button aria-label="Close project browser"><Cross /></button></PaletteHead>
          <TreeArea><Branch>{tree.map((n) => <TreeItem key={n.label} n={n} depth={0} />)}</Branch></TreeArea>
        </Dock>
        <Views>
          <ViewTabs>
            <ViewTab><PlanIcon /><span>Level 1</span></ViewTab>
            <ViewTab $on><HouseIcon /><span>South</span><button aria-label="Close South"><Cross /></button></ViewTab>
            <ViewTab><PlanIcon /><span>Level 3</span></ViewTab>
          </ViewTabs>
          <Sheet><Elevation /></Sheet>
          <ViewBar>
            <Scale>1 : 100</Scale>
            <BarTools>{barIcons.map(([label, art]) => <button key={label} aria-label={label}><I s={16}>{art}</I></button>)}</BarTools>
            <HThumb />
            <Timer>0:00</Timer>
          </ViewBar>
        </Views>
      </Work>
    </Shell>
  );
}
